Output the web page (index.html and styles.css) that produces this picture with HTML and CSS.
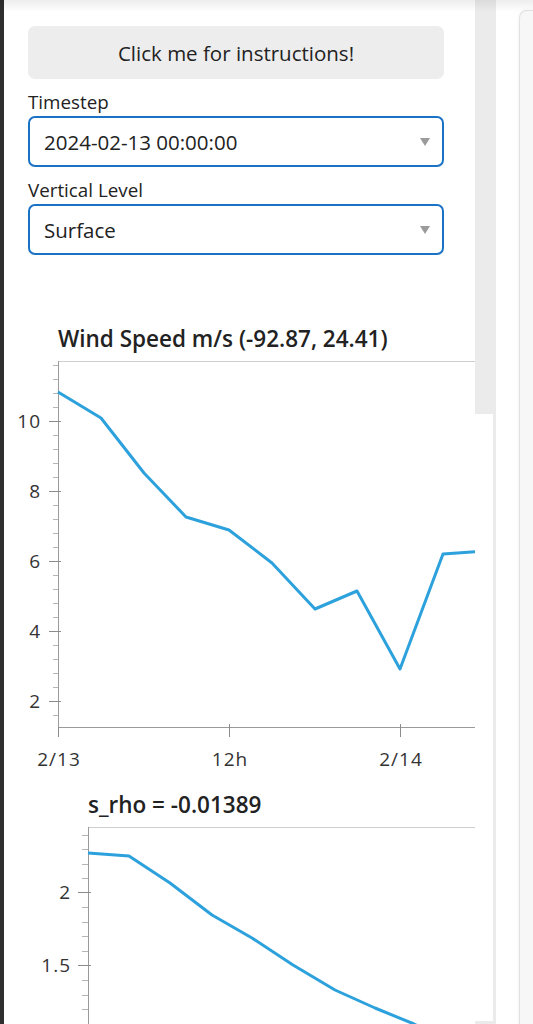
FILE: index.html
```html
<!DOCTYPE html>
<html lang="en">
<head>
    <meta charset="UTF-8">
    <meta name="viewport" content="width=device-width, initial-scale=1.0">
    <title>Wind Speed Explorer</title>
    <link rel="stylesheet" href="styles.css">
</head>
<body>
    <div class="app">
        <!-- Borde oscuro de la ventana -->
        <div class="edge"></div>

        <!-- Panel lateral con controles y gráficas -->
        <div class="sidebar">
            <div class="controls">
                <button class="help-button">Click me for instructions!</button>

                <label class="field-label">Timestep</label>
                <div class="select-box">
                    <span>2024-02-13 00:00:00</span>
                    <span class="select-arrow"></span>
                </div>

                <label class="field-label">Vertical Level</label>
                <div class="select-box">
                    <span>Surface</span>
                    <span class="select-arrow"></span>
                </div>
            </div>

            <!-- Serie de tiempo: velocidad del viento -->
            <svg class="chart chart-wind" width="471" height="480" viewBox="4 300 471 480">
                <text class="chart-title" x="58" y="347">Wind Speed m/s (-92.87, 24.41)</text>
                <line class="frame" x1="58" y1="361.5" x2="475" y2="361.5"/>
                <line class="axis" x1="58.5" y1="361" x2="58.5" y2="728"/>
                <line class="axis" x1="58" y1="727.5" x2="475" y2="727.5"/>
                <g class="minor-ticks">
                    <line x1="53" y1="365.5" x2="58" y2="365.5"/>
                    <line x1="53" y1="379.5" x2="58" y2="379.5"/>
                    <line x1="53" y1="393.5" x2="58" y2="393.5"/>
                    <line x1="53" y1="407.5" x2="58" y2="407.5"/>
                    <line x1="53" y1="435.5" x2="58" y2="435.5"/>
                    <line x1="53" y1="449.5" x2="58" y2="449.5"/>
                    <line x1="53" y1="463.5" x2="58" y2="463.5"/>
                    <line x1="53" y1="477.5" x2="58" y2="477.5"/>
                    <line x1="53" y1="505.5" x2="58" y2="505.5"/>
                    <line x1="53" y1="519.5" x2="58" y2="519.5"/>
                    <line x1="53" y1="533.5" x2="58" y2="533.5"/>
                    <line x1="53" y1="547.5" x2="58" y2="547.5"/>
                    <line x1="53" y1="575.5" x2="58" y2="575.5"/>
                    <line x1="53" y1="589.5" x2="58" y2="589.5"/>
                    <line x1="53" y1="603.5" x2="58" y2="603.5"/>
                    <line x1="53" y1="617.5" x2="58" y2="617.5"/>
                    <line x1="53" y1="645.5" x2="58" y2="645.5"/>
                    <line x1="53" y1="659.5" x2="58" y2="659.5"/>
                    <line x1="53" y1="673.5" x2="58" y2="673.5"/>
                    <line x1="53" y1="687.5" x2="58" y2="687.5"/>
                    <line x1="53" y1="715.5" x2="58" y2="715.5"/>
                </g>
                <g class="major-ticks">
                    <line x1="49" y1="421.5" x2="61" y2="421.5"/>
                    <line x1="49" y1="491.5" x2="61" y2="491.5"/>
                    <line x1="49" y1="561.5" x2="61" y2="561.5"/>
                    <line x1="49" y1="631.5" x2="61" y2="631.5"/>
                    <line x1="49" y1="701.5" x2="61" y2="701.5"/>
                    <line x1="58.5" y1="727" x2="58.5" y2="737"/>
                    <line x1="229.5" y1="724" x2="229.5" y2="737"/>
                    <line x1="400.5" y1="724" x2="400.5" y2="737"/>
                </g>
                <g class="y-labels">
                    <text x="41" y="428">10</text>
                    <text x="41" y="498">8</text>
                    <text x="41" y="568">6</text>
                    <text x="41" y="638">4</text>
                    <text x="41" y="708">2</text>
                </g>
                <g class="x-labels">
                    <text x="59" y="766">2/13</text>
                    <text x="230" y="766">12h</text>
                    <text x="401" y="766">2/14</text>
                </g>
                <polyline class="series" points="58,392 101,418 144,473 186,517 229,530 272,563 315,609 357,591 400,669 443,554 486,551"/>
            </svg>

            <!-- Serie de tiempo: s_rho -->
            <svg class="chart chart-rho" width="471" height="260" viewBox="4 780 471 260">
                <text class="chart-title" x="88" y="813">s_rho = -0.01389</text>
                <line class="frame" x1="88" y1="827.5" x2="475" y2="827.5"/>
                <line class="axis" x1="88.5" y1="827" x2="88.5" y2="1040"/>
                <g class="minor-ticks">
                    <line x1="82" y1="835.5" x2="88" y2="835.5"/>
                    <line x1="82" y1="849.5" x2="88" y2="849.5"/>
                    <line x1="82" y1="864.5" x2="88" y2="864.5"/>
                    <line x1="82" y1="878.5" x2="88" y2="878.5"/>
                    <line x1="82" y1="907.5" x2="88" y2="907.5"/>
                    <line x1="82" y1="922.5" x2="88" y2="922.5"/>
                    <line x1="82" y1="936.5" x2="88" y2="936.5"/>
                    <line x1="82" y1="951.5" x2="88" y2="951.5"/>
                    <line x1="82" y1="980.5" x2="88" y2="980.5"/>
                    <line x1="82" y1="995.5" x2="88" y2="995.5"/>
                    <line x1="82" y1="1009.5" x2="88" y2="1009.5"/>
                </g>
                <g class="major-ticks">
                    <line x1="78" y1="892.5" x2="91" y2="892.5"/>
                    <line x1="78" y1="965.5" x2="91" y2="965.5"/>
                </g>
                <g class="y-labels">
                    <text x="71" y="899">2</text>
                    <text x="71" y="972">1.5</text>
                </g>
                <polyline class="series" points="88,853 129,856 170,883 212,915 252,938 293,965 335,990 375,1008 414,1024 455,1044"/>
            </svg>
        </div>

        <!-- Barra de desplazamiento -->
        <div class="scrollbar">
            <div class="scroll-thumb"></div>
            <div class="scroll-track"></div>
        </div>

        <!-- Área principal (recortada) -->
        <div class="main">
            <div class="main-panel"></div>
        </div>
    </div>
</body>
</html>
```

FILE: styles.css
```css
/* Estilos generales */
body {
    margin: 0;
    padding: 0;
    background-color: #fff;
    font-family: "Open Sans", "Noto Sans", sans-serif;
    color: #222;
}

.app {
    position: relative;
    display: flex;
    height: 1024px;
    overflow: hidden;
}

/* Sombra superior */
.app::before {
    content: "";
    position: absolute;
    top: 0;
    left: 0;
    right: 0;
    height: 12px;
    background: linear-gradient(rgba(0, 0, 0, 0.07), rgba(0, 0, 0, 0));
    pointer-events: none;
}

.edge {
    width: 4px;
    flex-shrink: 0;
    background-color: #2e2e2e;
}

/* Panel lateral */
.sidebar {
    width: 471px;
    flex-shrink: 0;
    background-color: #fff;
}

.controls {
    padding: 26px 31px 0 24px;
}

.help-button {
    display: block;
    width: 100%;
    height: 53px;
    border: none;
    border-radius: 7px;
    background-color: #ededed;
    font-family: inherit;
    font-size: 20.5px;
    color: #222;
}

.field-label {
    display: block;
    margin-top: 10px;
    font-size: 18.8px;
    line-height: 27px;
    color: #222;
}

.select-box {
    display: flex;
    align-items: center;
    justify-content: space-between;
    height: 51px;
    box-sizing: border-box;
    padding: 0 12px 0 14px;
    border: 2px solid #1a72c4;
    border-radius: 7px;
    font-size: 20.5px;
    color: #222;
}

.select-arrow {
    width: 0;
    height: 0;
    border-left: 5.5px solid transparent;
    border-right: 5.5px solid transparent;
    border-top: 8px solid #9b9b9b;
}

/* Gráficas */
.chart {
    display: block;
}

.chart-wind {
    margin-top: 45px;
}

.chart-title {
    font-size: 22.5px;
    font-weight: 600;
    fill: #222;
}

.frame {
    stroke: #cfcfcf;
    stroke-width: 1;
}

.axis {
    stroke: #9a9a9a;
    stroke-width: 1;
}

.minor-ticks line {
    stroke: #b5b5b5;
    stroke-width: 1;
}

.major-ticks line {
    stroke: #8c8c8c;
    stroke-width: 1;
}

.y-labels text {
    font-size: 19px;
    letter-spacing: 1px;
    fill: #333;
    text-anchor: end;
}

.x-labels text {
    font-size: 19px;
    letter-spacing: 1px;
    fill: #333;
    text-anchor: middle;
}

.series {
    fill: none;
    stroke: #2ca1dc;
    stroke-width: 3;
    stroke-linejoin: round;
}

/* Barra de desplazamiento */
.scrollbar {
    width: 21px;
    flex-shrink: 0;
    display: flex;
    flex-direction: column;
    background-color: #ebebeb;
}

.scroll-thumb {
    height: 414px;
}

.scroll-track {
    height: 607px;
    width: 18px;
    background-color: #fff;
}

/* Área principal */
.main {
    flex: 1;
    padding: 10px 0 0 23px;
}

.main-panel {
    height: 100%;
    border: 1px solid #e2e2e2;
    border-right: none;
    border-top-left-radius: 8px;
    background-color: #f7f7f7;
    box-shadow: 0 0 4px rgba(0, 0, 0, 0.06);
}
```
